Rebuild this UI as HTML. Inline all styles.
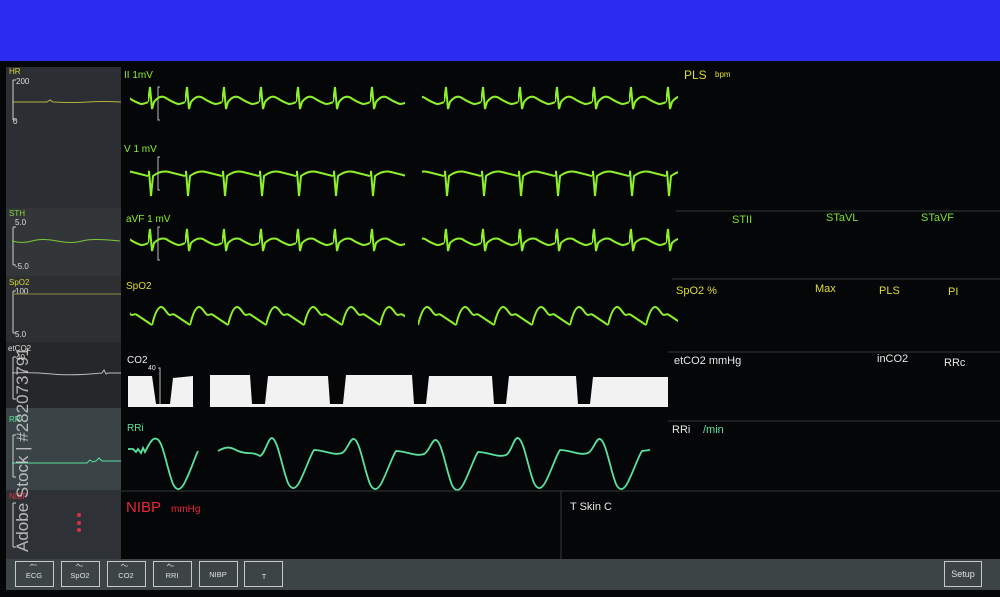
<!DOCTYPE html>
<html><head><meta charset="utf-8"><style>
html,body{margin:0;padding:0;background:#050607;width:1000px;height:597px;overflow:hidden}
svg{display:block;font-family:"Liberation Sans",sans-serif}
</style></head><body>
<svg width="1000" height="597" viewBox="0 0 1000 597" xmlns="http://www.w3.org/2000/svg">
<defs>
<pattern id="pII" patternUnits="userSpaceOnUse" x="0" y="80" width="37" height="40">
<path d="M0 22 l2 -15 l2 22 l2 -7 q6 -8 12 -4 q6 4 12 6 q3 0 7 -2" fill="none" stroke="#8cf02a" stroke-width="2"/>
</pattern>
<pattern id="pV" patternUnits="userSpaceOnUse" x="0" y="155" width="37" height="45">
<path d="M0 21 l1 -5 l2 25 l2 -20 q8 -6 16 -4 q8 2 16 4" fill="none" stroke="#8cf02a" stroke-width="2"/>
</pattern>
<pattern id="pF" patternUnits="userSpaceOnUse" x="0" y="225" width="37" height="35">
<path d="M0 18 l2 -14 l2 22 l1 -4 l1 -4 q6 -6 12 -4 q6 4 12 6 q4 0 7 -2" fill="none" stroke="#8cf02a" stroke-width="2"/>
</pattern>
<pattern id="pS" patternUnits="userSpaceOnUse" x="0" y="298" width="38" height="35">
<path d="M0 27 c2 -8 5 -18 9 -18 c4 0 6 8 9 8 c2 0 3 -2 5 0 l15 10" fill="none" stroke="#8cf02a" stroke-width="2"/>
</pattern>
</defs>
<rect x="0" y="0" width="1000" height="61" fill="#2b2bf2"/>
<rect x="6" y="67" width="115" height="141" fill="#2b2f33"/>
<rect x="6" y="208" width="115" height="68" fill="#323639"/>
<rect x="6" y="276" width="115" height="66" fill="#2d2f32"/>
<rect x="6" y="342" width="115" height="66" fill="#262729"/>
<rect x="6" y="408" width="115" height="82" fill="#3a4446"/>
<rect x="6" y="490" width="115" height="69" fill="#2e3236"/>
<g fill="none" stroke="#ccc" stroke-width="1">
<path d="M13 80 v40 M13 80 h3 M13 120 h3"/>
<path d="M13 227 v38 M13 227 h3 M13 265 h3"/>
<path d="M13 291 v42 M13 291 h3 M13 333 h3"/>
<path d="M13 357 v42 M13 357 h3 M13 399 h3"/>
<path d="M13 435 v42 M13 435 h3 M13 477 h3"/>
<path d="M13 503 v44 M13 503 h3 M13 547 h3"/>
</g>
<g font-size="8">
<text x="9" y="74" fill="#d8d83a">HR</text>
<text x="16" y="84" fill="#ddd">200</text>
<text x="13" y="124" fill="#ddd">0</text>
<text x="9" y="216" fill="#8cd83a">STH</text>
<text x="15" y="225" fill="#ddd">5.0</text>
<text x="15" y="269" fill="#ddd">-5.0</text>
<text x="9" y="285" fill="#d8d83a">SpO2</text>
<text x="15" y="294" fill="#ddd">100</text>
<text x="15" y="337" fill="#ddd">5.0</text>
<text x="8" y="351" fill="#ddd">etCO2</text>
<text x="16" y="360" fill="#ddd">40</text>
<text x="9" y="422" fill="#5ce0a0">RR</text>
<text x="9" y="499" fill="#e03040">NIBP</text>
</g>
<path d="M12 102 h35 l3 -2 l3 2 q20 1 35 0 t33 0" stroke="#b9b040" stroke-width="1" fill="none"/>
<path d="M12 241 q10 3 20 0 t25 0 t25 0 t38 0" stroke="#7cc83a" stroke-width="1" fill="none"/>
<path d="M12 294 h109" stroke="#8a8a3a" stroke-width="1"/>
<path d="M12 373 q20 -1 40 1 t50 -1 l2 -3 l2 4 l2 -1 h13" stroke="#bbb" stroke-width="1" fill="none"/>
<path d="M12 463 h75 l3 -3 l3 2 l3 -1 l3 -3 l3 3 h19" stroke="#5ce0a0" stroke-width="1" fill="none"/>
<g fill="#e03040"><circle cx="79" cy="515" r="2"/><circle cx="79" cy="523" r="2"/><circle cx="79" cy="530" r="2"/></g>
<text transform="translate(28,552) rotate(-90)" font-size="17" fill="#d9d9d9" fill-opacity="0.8">Adobe Stock | #282073791</text>

<g font-size="10" fill="#8cf02a">
<text x="124" y="78">II  1mV</text>
<text x="124" y="152">V   1 mV</text>
<text x="126" y="222">aVF   1 mV</text>
</g>
<text x="126" y="289" font-size="10" fill="#e0dd3a">SpO2</text>
<g fill="none" stroke="#bbb" stroke-width="1">
<path d="M160 87 h-2 v33 h2"/><path d="M160 157 h-2 v33 h2"/><path d="M160 227 h-2 v33 h2"/>
</g>
<rect x="130" y="80" width="275" height="40" fill="url(#pII)"/>
<rect x="422" y="80" width="256" height="40" fill="url(#pII)"/>
<rect x="130" y="155" width="275" height="45" fill="url(#pV)"/>
<rect x="422" y="155" width="256" height="45" fill="url(#pV)"/>
<rect x="130" y="225" width="275" height="35" fill="url(#pF)"/>
<rect x="422" y="225" width="256" height="35" fill="url(#pF)"/>
<rect x="130" y="298" width="275" height="35" fill="url(#pS)"/>
<rect x="418" y="298" width="260" height="35" fill="url(#pS)"/>

<text x="127" y="363" font-size="10" fill="#eee">CO2</text>
<text x="148" y="370" font-size="7" fill="#eee">40</text>
<path d="M158 368 h2 v38" stroke="#bbb" fill="none"/>
<path d="M128 376 h24 l4 28 h14 l3 -26 l20 -2 v31 h-65z" fill="#f2f2f2"/>
<polygon points="210,375 250,375 252,404 265,404 268,376 328,376 330,404 343,404 346,375 412,375 414,404 426,404 429,376 492,376 494,404 506,404 509,376 576,376 578,404 590,404 593,377 668,377 668,407 210,407" fill="#f2f2f2"/>

<text x="127" y="431" font-size="10" fill="#5ce0a0">RRi</text>
<path d="M128 449 l5 0 l3 3 l2 -3 l3 4 l2 -5 l2 4 c5 -10 8 -15 12 -13 c6 2 10 30 16 45 c4 8 8 6 12 -2 c6 -12 10 -25 13 -31" fill="none" stroke="#5ce0a0" stroke-width="1.8"/>
<path d="M218 451 c10 -6 14 -3 20 0 c10 4 14 0 22 5 c5 -2 8 -18 12 -18 c6 2 10 30 16 45 c4 8 8 6 12 -2 c6 -12 10 -25 14 -31 c10 0 20 6 28 3 c5 -2 8 -15 12 -14 c6 2 10 30 16 45 c4 8 8 6 12 -2 c6 -12 10 -25 14 -31 c10 0 20 6 28 3 c5 -2 8 -15 12 -14 c6 2 10 30 16 45 c4 8 8 6 12 -2 c6 -12 10 -25 14 -31 c10 0 20 6 28 3 c5 -2 8 -18 12 -17 c6 2 10 30 16 45 c4 8 8 6 12 -2 c6 -12 10 -25 14 -31 c10 0 20 6 28 3 c5 -2 8 -15 12 -14 c6 2 10 30 16 45 c4 8 8 6 12 -2 c6 -12 10 -25 14 -31 l8 -1" fill="none" stroke="#5ce0a0" stroke-width="1.8"/>

<g stroke="#2e3a3a" stroke-width="1">
<path d="M676 211 H1000"/><path d="M672 279 H1000"/><path d="M668 352 H1000"/><path d="M668 421 H1000"/>
<path d="M121 491 H1000"/><path d="M561 491 V559"/>
</g>

<text x="684" y="79" font-size="12" fill="#e0dd3a">PLS</text>
<text x="715" y="77" font-size="8" fill="#e0dd3a">bpm</text>
<g font-size="11" fill="#7ee02a">
<text x="732" y="223">STII</text><text x="826" y="221">STaVL</text><text x="921" y="221">STaVF</text>
</g>
<g font-size="11" fill="#e0dd3a">
<text x="676" y="294">SpO2  %</text><text x="815" y="292">Max</text><text x="879" y="294">PLS</text><text x="948" y="295">PI</text>
</g>
<g font-size="11" fill="#e8e8e8">
<text x="674" y="364">etCO2  mmHg</text><text x="877" y="362">inCO2</text><text x="944" y="366">RRc</text>
<text x="672" y="433">RRi</text>
<text x="570" y="510">T Skin  C</text>
</g>
<text x="703" y="433" font-size="11" fill="#5ce0a0">/min</text>
<text x="126" y="512" font-size="15" fill="#e8283a">NIBP</text>
<text x="171" y="512" font-size="10" fill="#e8283a">mmHg</text>

<rect x="6" y="559" width="994" height="31" fill="#3d4446"/>
<g fill="none" stroke="#c8c8c8" stroke-width="1">
<rect x="15.5" y="561.5" width="38" height="25"/>
<rect x="61.5" y="561.5" width="38" height="25"/>
<rect x="107.5" y="561.5" width="38" height="25"/>
<rect x="153.5" y="561.5" width="38" height="25"/>
<rect x="199.5" y="561.5" width="38" height="25"/>
<rect x="244.5" y="561.5" width="38" height="25"/>
<rect x="944.5" y="561.5" width="37" height="25"/>
<path d="M30 566 l2 -2 l1 1 h4 M76 566 l2 -2 l2 2 h3 M121 566 l2 -2 l2 2 h3 M167 566 l2 -2 l2 2 h3" stroke-width="0.8"/>
</g>
<g font-size="7.5" fill="#e0e0e0" text-anchor="middle">
<text x="34" y="578">ECG</text><text x="80" y="578">SpO2</text><text x="126" y="578">CO2</text>
<text x="172" y="578">RRI</text><text x="218" y="577">NIBP</text><text x="264" y="579">T</text>
<text x="963" y="577" font-size="9">Setup</text>
</g>
</svg>
</body></html>
